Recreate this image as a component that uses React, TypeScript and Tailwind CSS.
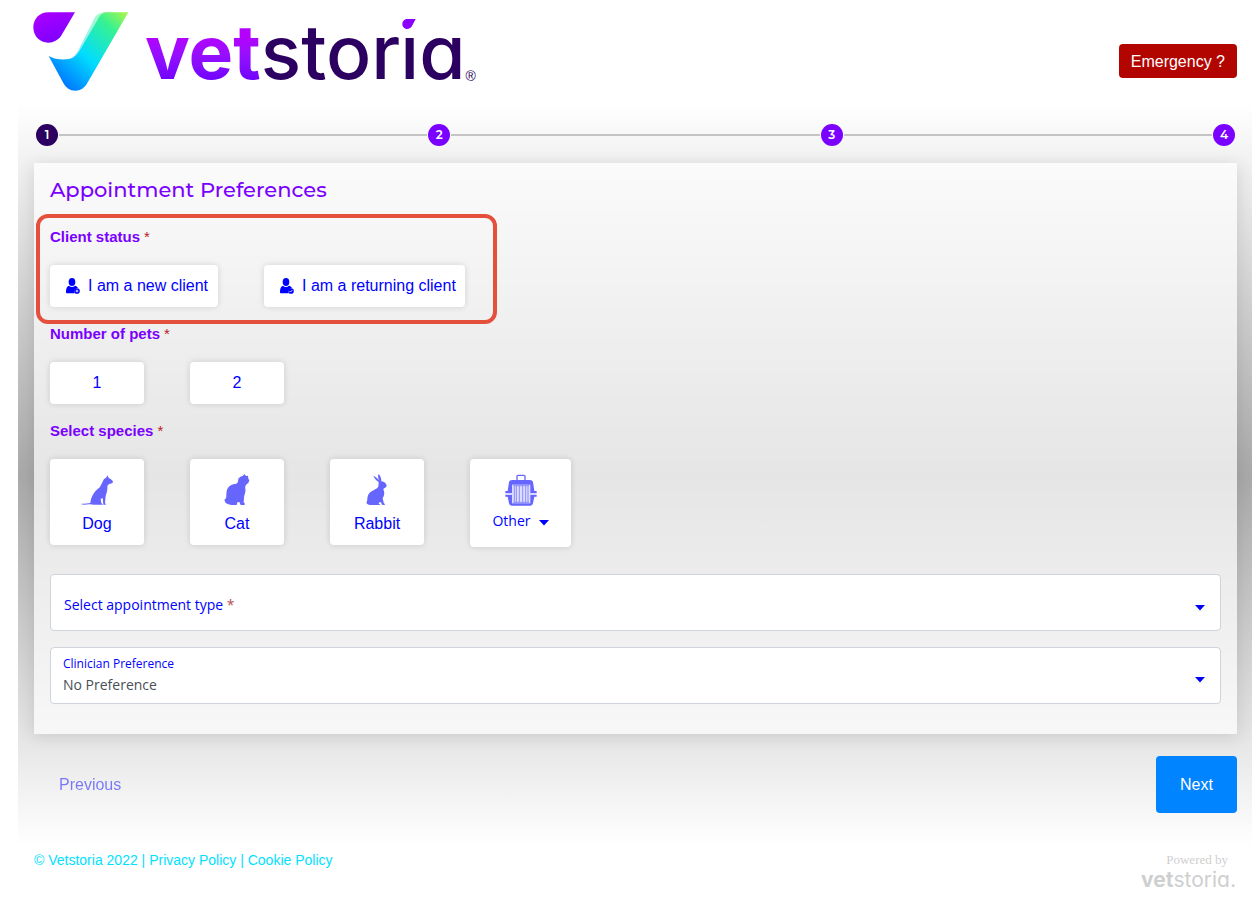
import React, { useState } from "react";

const sans = "font-['Open_Sans',sans-serif]";

function LogoMark() {
  return (
    <svg width="96" height="80" viewBox="0 0 288 240" aria-hidden="true">
      <defs>
        <linearGradient id="drop" x1="0.2" y1="0" x2="0.7" y2="1">
          <stop offset="0" stopColor="#aa00ff" />
          <stop offset="1" stopColor="#7a00ff" />
        </linearGradient>
        <linearGradient id="tick" gradientUnits="userSpaceOnUse" x1="75" y1="215" x2="270" y2="0">
          <stop offset="0" stopColor="#0070ff" />
          <stop offset="0.4" stopColor="#00dcff" />
          <stop offset="0.8" stopColor="#37f291" />
          <stop offset="1" stopColor="#a0f550" />
        </linearGradient>
      </defs>
      <path fill="url(#drop)" d="M126 1H46C20 1 1 20 1 46s19 46 45 46c16 0 29-8 38-20Z" />
      <path
        fill="url(#tick)"
        opacity="0.45"
        d="M120 141c-8 4-14 5-20 4l18-8c8-6 13-14 18-22l46-92C190 8 200 1 216 1h18l-90 140Z"
      />
      <path
        fill="url(#tick)"
        d="M47 132c14 9 34 11 54 10 20-1 30-12 40-28l57-98C204 6 212 1 224 1h62L163 213c-8 15-20 23-36 23s-28-8-36-23Z"
      />
    </svg>
  );
}

function StatusIcon({ returning }: { returning?: boolean }) {
  return (
    <svg width="14" height="16" viewBox="0 0 42 48" aria-hidden="true">
      <ellipse cx="18" cy="12" rx="10" ry="12" fill="currentColor" />
      <path fill="currentColor" d="M9 23c5 5 13 5 18 0 4 1 7 3 9 7a11 11 0 0 0-10 16H3c-2 0-3-2-3-4 0-10 2-17 9-19Z" />
      <circle cx="33" cy="39" r="8.500" fill="currentColor" />
      {returning ? (
        <path d="m28.500 39 3 3 6-6" fill="none" stroke="#fff" strokeWidth="2.500" />
      ) : (
        <path d="M33 35v8M29 39h8" fill="none" stroke="#fff" strokeWidth="2.500" />
      )}
    </svg>
  );
}

function DogIcon() {
  return (
    <svg width="32" height="30" viewBox="0 0 96 90" fill="currentColor" aria-hidden="true">
      <path d="M80 1l3 8 6 3 7 7-2 6-10 2-5 6c1 12-2 22-5 30l-2 20 3 6h-8l-2-20-6 3 2 12 5 5H38c-3 0-7-1-10-1C20 87 10 91 1 88v-2c9 1 18-1 27-2 2-22 15-38 27-46 6-8 10-18 14-26l6-4Z" />
    </svg>
  );
}

function CatIcon() {
  return (
    <svg width="26" height="31" viewBox="0 0 76 93" fill="currentColor" aria-hidden="true">
      <path d="M60 0l5 6 6-1 1 9 3 5c-1 6-4 9-8 12-4 4-5 8-4 14 2 10-4 18-4 26l-1 14 3 3v5H49l-4-9-6 1-2 9H24L10 90C3 88 0 82 1 76c7 0 4-14 6-24 3-16 15-22 27-22 6-2 8-8 8-16 3-5 9-8 14-9Z" />
    </svg>
  );
}

function RabbitIcon() {
  return (
    <svg width="22" height="31" viewBox="0 0 64 93" fill="currentColor" aria-hidden="true">
      <path d="M21 5c8 3 14 9 18 15-4-8-5-15-2-20 6 6 8 14 8 22 9 1 17 8 16 15-3 5-9 5-10 9 5 10 3 20-2 26l3 14 5 6-9 1-5-9-7 3 6 6H10c-7-1-11-5-9-9 3-4 1-12 4-20 5-12 19-16 28-22 5-4 3-12 4-18-8-6-13-11-16-19Z" />
    </svg>
  );
}

function CarrierIcon() {
  return (
    <svg width="32" height="32" viewBox="0 0 96 94" aria-hidden="true">
      <path d="M36 18V6c0-2 1-3 3-3h18c2 0 3 1 3 3v12" fill="none" stroke="currentColor" strokeWidth="4" />
      <path
        fill="currentColor"
        d="M22 17h52c6 0 9 2 10 7l4 26h7v7H1v-7h7l4-26c1-5 4-7 10-7ZM1 61h94v6h-7l-4 20c-1 5-4 7-9 7H21c-5 0-8-2-9-7L8 67H1Z"
      />
      <rect x="21" y="31" width="55" height="56" fill="#dcdcff" />
      <path d="M28 34v50M34 34v50M43 34v50M53 34v50M62 34v50M69 34v50M25 34h47M25 84h47" stroke="currentColor" strokeWidth="2" />
    </svg>
  );
}

function Caret() {
  return (
    <svg width="10" height="6" viewBox="0 0 10 6" aria-hidden="true">
      <path d="M0 0h10L5 5.500Z" fill="#0000ff" />
    </svg>
  );
}

function SectionLabel({ id, children }: { id: string; children: React.ReactNode }) {
  return (
    <h2 id={id} className="flex gap-1 text-[15px] leading-5 font-bold text-[#7a00ff]">
      {children} <span className="font-normal text-[#b91c1c]">*</span>
    </h2>
  );
}

const tile =
  "flex cursor-pointer items-center rounded-[4px] bg-white text-base text-[#0000ff] shadow-[0_0_6px_rgba(0,0,0,0.14)]";

function Stepper() {
  return (
    <ol className="flex items-center px-0.5 text-xs leading-none font-semibold text-white font-['Montserrat','Open_Sans',sans-serif]">
      {[1, 2, 3, 4].map((n) => (
        <li key={n} className={n === 1 ? "flex items-center" : "flex flex-1 items-center"}>
          {n > 1 && <span className="mx-px h-0.5 flex-1 bg-[#c4c4c4]" />}
          <span
            className={
              n === 1
                ? "flex size-[22px] items-center justify-center rounded-full bg-[#2b0061]"
                : "flex size-[22px] items-center justify-center rounded-full bg-[#7a00ff]"
            }
          >
            {n}
          </span>
        </li>
      ))}
    </ol>
  );
}

export default function App() {
  const [status, setStatus] = useState("");
  const [pets, setPets] = useState(0);
  const [species, setSpecies] = useState("");

  return (
    <div className="min-h-screen bg-white font-['Liberation_Sans',Arial,sans-serif]">
      <header className="flex h-[104px] items-start justify-between pt-3 pr-[15px] pl-[33px]">
        <div className="flex items-start gap-4" role="img" aria-label="vetstoria">
          <LogoMark />
          <div className="relative flex text-[75px] leading-[80px] text-[#2b0061] font-['Inter',sans-serif]">
            <span className="bg-linear-to-b from-[#b400ff] from-30% to-[#7000ff] to-85% bg-clip-text font-bold text-transparent">
              vet
            </span>
            <span className="font-medium [font-feature-settings:'cv11']">stor</span>
            <span className="relative font-medium">
              ı
              <svg className="absolute top-[7px] left-0.5" width="14" height="10" viewBox="0 0 40 30" aria-hidden="true">
                <path d="M40 0H14C6 0 0 7 0 15s6 15 14 15c7 0 12-4 15-9Z" fill="#8a00ff" />
              </svg>
            </span>
            <span className="font-medium [font-feature-settings:'cv11']">a</span>
            <span className="self-end pb-[9px] text-sm leading-none font-['Liberation_Sans',Arial,sans-serif]">®</span>
          </div>
        </div>
        <button className="mt-8 cursor-pointer rounded-[4px] bg-[#b30500] px-3 pt-[5px] pb-[3px] text-base leading-[26px] text-white">
          Emergency ?
        </button>
      </header>

      <main className="ml-[18px] bg-linear-to-b from-white via-[#a9a9a9] to-white pt-5 pr-[15px] pb-[33px] pl-4">
        <Stepper />

        <form
          className="mt-[17px] bg-white/70 px-4 pt-[13px] pb-[30px] shadow-[0_2px_16px_rgba(0,0,0,0.12)]"
          onSubmit={(e) => e.preventDefault()}
        >
          <h1 className="text-[21px] leading-7 font-medium text-[#7a00ff] font-['Montserrat','Inter',sans-serif]">
            Appointment Preferences
          </h1>

          <section aria-labelledby="status" className="relative mt-[23px] w-fit">
            <div className="pointer-events-none absolute -top-[13px] -right-8 -bottom-[17px] -left-[14px] rounded-xl border-4 border-[#e5503c]" />
            <SectionLabel id="status">Client status</SectionLabel>
            <div className="mt-[18px] flex gap-[46px]">
              <button
                type="button"
                aria-pressed={status === "new"}
                onClick={() => setStatus("new")}
                className={`${tile} h-[42px] w-[168px] gap-2 pl-4 whitespace-nowrap`}
              >
                <StatusIcon />I am a new client
              </button>
              <button
                type="button"
                aria-pressed={status === "returning"}
                onClick={() => setStatus("returning")}
                className={`${tile} h-[42px] w-[201px] gap-2 pl-4 whitespace-nowrap`}
              >
                <StatusIcon returning />I am a returning client
              </button>
            </div>
          </section>

          <section aria-labelledby="pets" className="mt-[17px]">
            <SectionLabel id="pets">Number of pets</SectionLabel>
            <div className="mt-[18px] flex gap-[46px]">
              {[1, 2].map((n) => (
                <button
                  key={n}
                  type="button"
                  aria-pressed={pets === n}
                  onClick={() => setPets(n)}
                  className={`${tile} h-[42px] w-[94px] justify-center`}
                >
                  {n}
                </button>
              ))}
            </div>
          </section>

          <section aria-labelledby="species" className="mt-[17px]">
            <SectionLabel id="species">Select species</SectionLabel>
            <div className="mt-[18px] flex items-start gap-[46px]">
              {[
                { name: "Dog", icon: <DogIcon /> },
                { name: "Cat", icon: <CatIcon /> },
                { name: "Rabbit", icon: <RabbitIcon /> },
              ].map(({ name, icon }) => (
                <button
                  key={name}
                  type="button"
                  aria-pressed={species === name}
                  onClick={() => setSpecies(name)}
                  className={`${tile} h-[86px] w-[94px] flex-col pt-[14px]`}
                >
                  <span className="flex h-8 items-end text-[#6666ff]">{icon}</span>
                  <span className="mt-[7px] leading-6">{name}</span>
                </button>
              ))}
              <button type="button" aria-haspopup="menu" className={`${tile} h-[88px] w-[101px] flex-col pt-[15px]`}>
                <span className="flex text-[#6666ff]">
                  <CarrierIcon />
                </span>
                <span className={`flex items-center gap-2 text-sm leading-[30px] ${sans}`}>
                  Other
                  <span className="flex pt-1">
                    <Caret />
                  </span>
                </span>
              </button>
            </div>
          </section>

          <div className={`mt-[27px] grid gap-4 text-[#0000ff] ${sans}`}>
            <div className="relative">
              <label
                htmlFor="appointment"
                className="pointer-events-none absolute top-[21px] left-[14px] text-sm leading-5"
              >
                Select appointment type <span className="text-[#b45050]">*</span>
              </label>
              <select
                id="appointment"
                className="block h-[57px] w-full appearance-none rounded-[4px] border border-[#ced4da] bg-white px-3 text-sm"
              >
                <option value=""></option>
              </select>
              <span className="pointer-events-none absolute top-[31px] right-4 flex">
                <Caret />
              </span>
            </div>
            <div className="relative">
              <label
                htmlFor="clinician"
                className="pointer-events-none absolute top-[9px] left-[13px] text-xs leading-4"
              >
                Clinician Preference
              </label>
              <select
                id="clinician"
                className="block h-[57px] w-full appearance-none rounded-[4px] border border-[#ced4da] bg-white px-3 pt-[18px] text-sm text-[#495057]"
              >
                <option>No Preference</option>
              </select>
              <span className="pointer-events-none absolute top-[30px] right-4 flex">
                <Caret />
              </span>
            </div>
          </div>
        </form>

        <div className="mt-[22px] flex items-center justify-between">
          <button disabled className="px-[25px] text-base text-[#0000ff] opacity-50">
            Previous
          </button>
          <button className="h-[57px] w-[81px] cursor-pointer rounded-[4px] bg-[#0084ff] text-base text-white">Next</button>
        </div>
      </main>

      <footer className="flex items-start justify-between pt-1 pr-4 pl-[34px]">
        <p className="text-sm leading-5 text-[#00e1ff]">
          © Vetstoria 2022 | <a href="#privacy">Privacy Policy</a> | <a href="#cookies">Cookie Policy</a>
        </p>
        <div className="flex flex-col items-end text-[#cfcfcf]">
          <span className="pr-2 text-[13px] leading-5 font-['Liberation_Serif','Times_New_Roman',serif]">Powered by</span>
          <span className="text-[21px] leading-5 font-['Inter',sans-serif] [font-feature-settings:'cv11']">
            <b>vet</b>storia.
          </span>
        </div>
      </footer>
    </div>
  );
}
